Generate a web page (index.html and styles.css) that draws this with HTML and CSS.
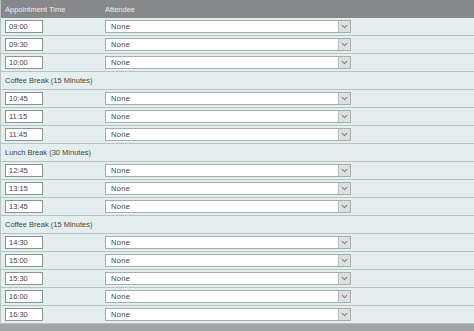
FILE: index.html
```html
<!DOCTYPE html>
<html>
<head>
<meta charset="utf-8">
<link rel="stylesheet" href="styles.css">
</head>
<body>
<table class="sched">
<thead>
<tr><th class="c-time">Appointment Time</th><th class="c-att">Attendee</th></tr>
</thead>
<tbody>
<tr><td class="c-time"><span class="tbox">09:00</span></td><td class="c-att"><span class="sel"><span class="val">None</span><span class="arr"><svg width="7" height="5" viewBox="0 0 7 5"><path d="M1 1.2 L3.5 3.6 L6 1.2" fill="none" stroke="#7a7a7a" stroke-width="1.1"/></svg></span></span></td></tr>
<tr><td class="c-time"><span class="tbox">09:30</span></td><td class="c-att"><span class="sel"><span class="val">None</span><span class="arr"><svg width="7" height="5" viewBox="0 0 7 5"><path d="M1 1.2 L3.5 3.6 L6 1.2" fill="none" stroke="#7a7a7a" stroke-width="1.1"/></svg></span></span></td></tr>
<tr><td class="c-time"><span class="tbox">10:00</span></td><td class="c-att"><span class="sel"><span class="val">None</span><span class="arr"><svg width="7" height="5" viewBox="0 0 7 5"><path d="M1 1.2 L3.5 3.6 L6 1.2" fill="none" stroke="#7a7a7a" stroke-width="1.1"/></svg></span></span></td></tr>
<tr class="brk"><td colspan="2">Coffee Break (15 Minutes)</td></tr>
<tr><td class="c-time"><span class="tbox">10:45</span></td><td class="c-att"><span class="sel"><span class="val">None</span><span class="arr"><svg width="7" height="5" viewBox="0 0 7 5"><path d="M1 1.2 L3.5 3.6 L6 1.2" fill="none" stroke="#7a7a7a" stroke-width="1.1"/></svg></span></span></td></tr>
<tr><td class="c-time"><span class="tbox">11:15</span></td><td class="c-att"><span class="sel"><span class="val">None</span><span class="arr"><svg width="7" height="5" viewBox="0 0 7 5"><path d="M1 1.2 L3.5 3.6 L6 1.2" fill="none" stroke="#7a7a7a" stroke-width="1.1"/></svg></span></span></td></tr>
<tr><td class="c-time"><span class="tbox">11:45</span></td><td class="c-att"><span class="sel"><span class="val">None</span><span class="arr"><svg width="7" height="5" viewBox="0 0 7 5"><path d="M1 1.2 L3.5 3.6 L6 1.2" fill="none" stroke="#7a7a7a" stroke-width="1.1"/></svg></span></span></td></tr>
<tr class="brk"><td colspan="2">Lunch Break (30 Minutes)</td></tr>
<tr><td class="c-time"><span class="tbox">12:45</span></td><td class="c-att"><span class="sel"><span class="val">None</span><span class="arr"><svg width="7" height="5" viewBox="0 0 7 5"><path d="M1 1.2 L3.5 3.6 L6 1.2" fill="none" stroke="#7a7a7a" stroke-width="1.1"/></svg></span></span></td></tr>
<tr><td class="c-time"><span class="tbox">13:15</span></td><td class="c-att"><span class="sel"><span class="val">None</span><span class="arr"><svg width="7" height="5" viewBox="0 0 7 5"><path d="M1 1.2 L3.5 3.6 L6 1.2" fill="none" stroke="#7a7a7a" stroke-width="1.1"/></svg></span></span></td></tr>
<tr><td class="c-time"><span class="tbox">13:45</span></td><td class="c-att"><span class="sel"><span class="val">None</span><span class="arr"><svg width="7" height="5" viewBox="0 0 7 5"><path d="M1 1.2 L3.5 3.6 L6 1.2" fill="none" stroke="#7a7a7a" stroke-width="1.1"/></svg></span></span></td></tr>
<tr class="brk"><td colspan="2">Coffee Break (15 Minutes)</td></tr>
<tr><td class="c-time"><span class="tbox">14:30</span></td><td class="c-att"><span class="sel"><span class="val">None</span><span class="arr"><svg width="7" height="5" viewBox="0 0 7 5"><path d="M1 1.2 L3.5 3.6 L6 1.2" fill="none" stroke="#7a7a7a" stroke-width="1.1"/></svg></span></span></td></tr>
<tr><td class="c-time"><span class="tbox">15:00</span></td><td class="c-att"><span class="sel"><span class="val">None</span><span class="arr"><svg width="7" height="5" viewBox="0 0 7 5"><path d="M1 1.2 L3.5 3.6 L6 1.2" fill="none" stroke="#7a7a7a" stroke-width="1.1"/></svg></span></span></td></tr>
<tr><td class="c-time"><span class="tbox">15:30</span></td><td class="c-att"><span class="sel"><span class="val">None</span><span class="arr"><svg width="7" height="5" viewBox="0 0 7 5"><path d="M1 1.2 L3.5 3.6 L6 1.2" fill="none" stroke="#7a7a7a" stroke-width="1.1"/></svg></span></span></td></tr>
<tr><td class="c-time"><span class="tbox">16:00</span></td><td class="c-att"><span class="sel"><span class="val">None</span><span class="arr"><svg width="7" height="5" viewBox="0 0 7 5"><path d="M1 1.2 L3.5 3.6 L6 1.2" fill="none" stroke="#7a7a7a" stroke-width="1.1"/></svg></span></span></td></tr>
<tr><td class="c-time"><span class="tbox">16:30</span></td><td class="c-att"><span class="sel"><span class="val">None</span><span class="arr"><svg width="7" height="5" viewBox="0 0 7 5"><path d="M1 1.2 L3.5 3.6 L6 1.2" fill="none" stroke="#7a7a7a" stroke-width="1.1"/></svg></span></span></td></tr>
</tbody>
</table>
<div class="foot"></div>
</body>
</html>
```
FILE: styles.css
```css
html, body {
  margin: 0;
  padding: 0;
  background: #e3efef;
  font-family: "Liberation Sans", Arial, sans-serif;
  font-size: 7.5px;
  color: #444;
}
.sched {
  width: 474px;
  border-collapse: collapse;
  border-spacing: 0;
  border-left: 1px solid #b9c4c4;
}
.sched th {
  background: #87888c;
  color: #eeeeee;
  font-weight: normal;
  text-align: left;
  height: 18px;
  padding: 0 0 0 4px;
  vertical-align: middle;
}
.sched td {
  height: 17px;
  padding: 0 0 0 4px;
  vertical-align: middle;
  border-bottom: 1px solid #b7c3c3;
  background: #e3efef;
}
.sched th.c-time, .sched td.c-time { width: 96px; }
.brk td {
  color: #444;
}
.tbox {
  display: flex;
  align-items: center;
  box-sizing: border-box;
  width: 38px;
  height: 13px;
  background: #fff;
  border: 1px solid #8e9494;
  padding-left: 3px;
  color: #444;
}
.sel {
  display: flex;
  align-items: stretch;
  box-sizing: border-box;
  width: 246px;
  height: 13px;
  background: #fff;
  border: 1px solid #a6aeae;
}
.val {
  flex: 1;
  display: flex;
  align-items: center;
  padding-left: 5px;
  letter-spacing: 0.3px;
  color: #444;
}
.arr {
  width: 11px;
  display: flex;
  align-items: center;
  justify-content: center;
  background: #dedfe0;
  border-left: 1px solid #b8bcbc;
}
.foot {
  height: 8px;
  background: #a3a4a6;
}
```
